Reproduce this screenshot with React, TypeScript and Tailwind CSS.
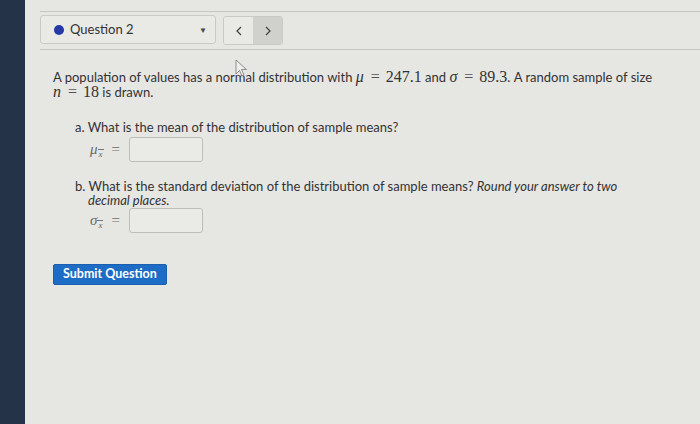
import React from 'react';

const serif = '"Liberation Serif", "DejaVu Serif", serif';

const Mi: React.FC<{ children: React.ReactNode }> = ({ children }) => (
  <span className="italic text-[16px] leading-[10px]" style={{ fontFamily: serif }}>{children}</span>
);

const Mn: React.FC<{ children: React.ReactNode }> = ({ children }) => (
  <span className="text-[16px] leading-[10px]" style={{ fontFamily: serif }}>{children}</span>
);

const Eq = () => (
  <span className="text-[16px] leading-[10px] ml-[7px] mr-[6px] text-[#555]" style={{ fontFamily: serif }}>=</span>
);

const AnswerRow: React.FC<{ symbol: string }> = ({ symbol }) => (
  <div className="flex items-center gap-[9px] pl-[15px]">
    <span className="text-[15px] text-[#6a6a6a] flex items-baseline" style={{ fontFamily: serif }}>
      <span className="italic">{symbol}</span>
      <span className="italic text-[9px] relative top-[3px] border-t border-[#777] leading-[9px] px-px">x</span>
      <span className="ml-[8px]">=</span>
    </span>
    <div className="w-[74px] h-[25px] border border-[#bdbdba] rounded-[3px] bg-[#eaeae7]"></div>
  </div>
);

export default function App() {
  return (
    <div className="flex w-full h-[424px] bg-[#e6e6e3] overflow-hidden" style={{ fontFamily: 'Lato, "Noto Sans", sans-serif' }}>
      <div className="w-[25px] shrink-0 bg-[#243347]"></div>
      <div className="flex-1 pl-[15px] relative">
        {/* header bar */}
        <div className="mt-[11px] border-t border-b border-[#c6c6c3] h-[39px] flex items-start pt-[3px] gap-[7px]">
          <div className="w-[176px] h-[29px] border border-[#c9c9c6] rounded-[3px] bg-[#e9e9e6] flex items-center pl-[13px] pr-[8px]">
            <span className="w-[10px] h-[10px] rounded-full bg-[#2438a8]"></span>
            <span className="ml-[6px] text-[13px] text-[#333]">Question 2</span>
            <span className="ml-auto text-[8px] text-[#444]">▼</span>
          </div>
          <div className="flex h-[29px] mt-px border border-[#c9c9c6] rounded-[3px] overflow-hidden">
            <div className="w-[29px] bg-[#e9e9e6] flex items-center justify-center">
              <svg width="8" height="10" viewBox="0 0 8 10"><path d="M6 1 L2 5 L6 9" fill="none" stroke="#444" strokeWidth="1.3" /></svg>
            </div>
            <div className="w-[29px] bg-[#d0d0cd] flex items-center justify-center">
              <svg width="8" height="10" viewBox="0 0 8 10"><path d="M2 1 L6 5 L2 9" fill="none" stroke="#444" strokeWidth="1.3" /></svg>
            </div>
          </div>
        </div>

        {/* cursor */}
        <svg className="absolute left-[210px] top-[59px]" width="14" height="20" viewBox="0 0 14 20">
          <path d="M1 1 L1 15 L4.5 11.5 L7 17 L9 16 L6.5 10.5 L11.5 10.5 Z" fill="#eeeeec" stroke="#777" strokeWidth="0.8" />
        </svg>

        <div className="pl-[13px] pt-[20px] text-[13px] leading-[15px] text-[#333]">
          <p>
            A population of values has a normal distribution with <Mi>μ</Mi><Eq /><Mn>247.1</Mn> and <Mi>σ</Mi><Eq /><Mn>89.3</Mn>. A random sample of size
            <br />
            <Mi>n</Mi><Eq /><Mn>18</Mn> is drawn.
          </p>

          <div className="pl-[22px] mt-[20px]">
            <p>a. What is the mean of the distribution of sample means?</p>
            <div className="mt-[2px]">
              <AnswerRow symbol="μ" />
            </div>

            <p className="mt-[17px] pl-[13px] -indent-[13px] leading-[14px]">
              b. What is the standard deviation of the distribution of sample means? <span className="italic">Round your answer to two</span>
              <br />
              <span className="italic">decimal places.</span>
            </p>
            <div className="mt-px">
              <AnswerRow symbol="σ" />
            </div>
          </div>

          <button className="mt-[31px] h-[21px] px-[9px] bg-[#1d6cc6] border border-[#1a5eb0] rounded-[2px] text-white text-[12.5px] font-bold leading-none">
            Submit Question
          </button>
        </div>
      </div>
    </div>
  );
}
